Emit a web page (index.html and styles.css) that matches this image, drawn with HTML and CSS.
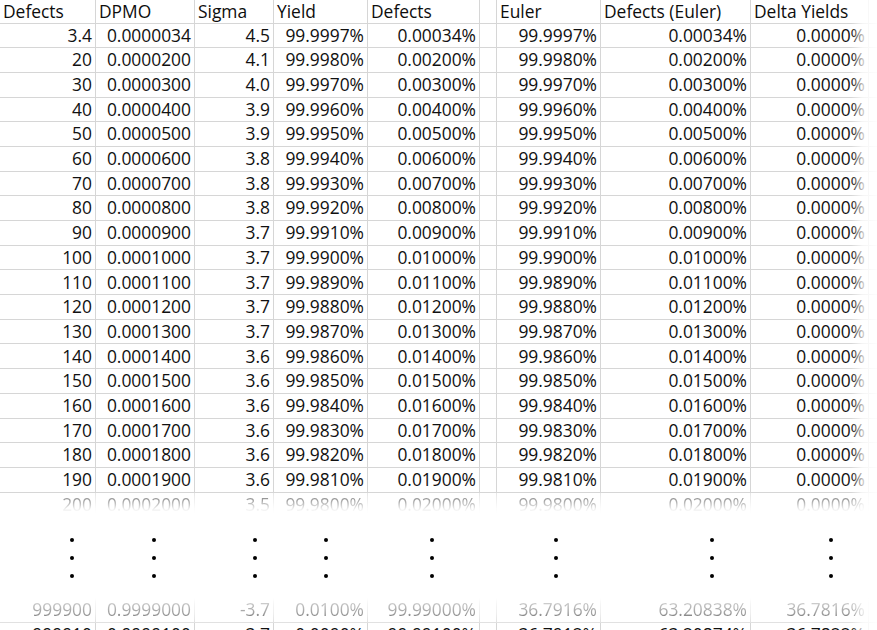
FILE: index.html
```html
<!DOCTYPE html>
<html lang="en">
<head>
<meta charset="utf-8">
<title>Sigma table</title>
<link rel="stylesheet" href="styles.css">
</head>
<body>
<div class="sheet">
  <div class="row head">
    <div class="c">Defects</div><div class="c">DPMO</div><div class="c">Sigma</div><div class="c">Yield</div><div class="c">Defects</div><div class="c"></div><div class="c">Euler</div><div class="c">Defects (Euler)</div><div class="c">Delta Yields</div><div class="c"></div>
  </div>
  <div class="row"><div class="c">3.4</div><div class="c">0.0000034</div><div class="c">4.5</div><div class="c">99.9997%</div><div class="c">0.00034%</div><div class="c"></div><div class="c">99.9997%</div><div class="c">0.00034%</div><div class="c">0.0000%</div><div class="c"></div></div>
  <div class="row"><div class="c">20</div><div class="c">0.0000200</div><div class="c">4.1</div><div class="c">99.9980%</div><div class="c">0.00200%</div><div class="c"></div><div class="c">99.9980%</div><div class="c">0.00200%</div><div class="c">0.0000%</div><div class="c"></div></div>
  <div class="row"><div class="c">30</div><div class="c">0.0000300</div><div class="c">4.0</div><div class="c">99.9970%</div><div class="c">0.00300%</div><div class="c"></div><div class="c">99.9970%</div><div class="c">0.00300%</div><div class="c">0.0000%</div><div class="c"></div></div>
  <div class="row"><div class="c">40</div><div class="c">0.0000400</div><div class="c">3.9</div><div class="c">99.9960%</div><div class="c">0.00400%</div><div class="c"></div><div class="c">99.9960%</div><div class="c">0.00400%</div><div class="c">0.0000%</div><div class="c"></div></div>
  <div class="row"><div class="c">50</div><div class="c">0.0000500</div><div class="c">3.9</div><div class="c">99.9950%</div><div class="c">0.00500%</div><div class="c"></div><div class="c">99.9950%</div><div class="c">0.00500%</div><div class="c">0.0000%</div><div class="c"></div></div>
  <div class="row"><div class="c">60</div><div class="c">0.0000600</div><div class="c">3.8</div><div class="c">99.9940%</div><div class="c">0.00600%</div><div class="c"></div><div class="c">99.9940%</div><div class="c">0.00600%</div><div class="c">0.0000%</div><div class="c"></div></div>
  <div class="row"><div class="c">70</div><div class="c">0.0000700</div><div class="c">3.8</div><div class="c">99.9930%</div><div class="c">0.00700%</div><div class="c"></div><div class="c">99.9930%</div><div class="c">0.00700%</div><div class="c">0.0000%</div><div class="c"></div></div>
  <div class="row"><div class="c">80</div><div class="c">0.0000800</div><div class="c">3.8</div><div class="c">99.9920%</div><div class="c">0.00800%</div><div class="c"></div><div class="c">99.9920%</div><div class="c">0.00800%</div><div class="c">0.0000%</div><div class="c"></div></div>
  <div class="row"><div class="c">90</div><div class="c">0.0000900</div><div class="c">3.7</div><div class="c">99.9910%</div><div class="c">0.00900%</div><div class="c"></div><div class="c">99.9910%</div><div class="c">0.00900%</div><div class="c">0.0000%</div><div class="c"></div></div>
  <div class="row"><div class="c">100</div><div class="c">0.0001000</div><div class="c">3.7</div><div class="c">99.9900%</div><div class="c">0.01000%</div><div class="c"></div><div class="c">99.9900%</div><div class="c">0.01000%</div><div class="c">0.0000%</div><div class="c"></div></div>
  <div class="row"><div class="c">110</div><div class="c">0.0001100</div><div class="c">3.7</div><div class="c">99.9890%</div><div class="c">0.01100%</div><div class="c"></div><div class="c">99.9890%</div><div class="c">0.01100%</div><div class="c">0.0000%</div><div class="c"></div></div>
  <div class="row"><div class="c">120</div><div class="c">0.0001200</div><div class="c">3.7</div><div class="c">99.9880%</div><div class="c">0.01200%</div><div class="c"></div><div class="c">99.9880%</div><div class="c">0.01200%</div><div class="c">0.0000%</div><div class="c"></div></div>
  <div class="row"><div class="c">130</div><div class="c">0.0001300</div><div class="c">3.7</div><div class="c">99.9870%</div><div class="c">0.01300%</div><div class="c"></div><div class="c">99.9870%</div><div class="c">0.01300%</div><div class="c">0.0000%</div><div class="c"></div></div>
  <div class="row"><div class="c">140</div><div class="c">0.0001400</div><div class="c">3.6</div><div class="c">99.9860%</div><div class="c">0.01400%</div><div class="c"></div><div class="c">99.9860%</div><div class="c">0.01400%</div><div class="c">0.0000%</div><div class="c"></div></div>
  <div class="row"><div class="c">150</div><div class="c">0.0001500</div><div class="c">3.6</div><div class="c">99.9850%</div><div class="c">0.01500%</div><div class="c"></div><div class="c">99.9850%</div><div class="c">0.01500%</div><div class="c">0.0000%</div><div class="c"></div></div>
  <div class="row"><div class="c">160</div><div class="c">0.0001600</div><div class="c">3.6</div><div class="c">99.9840%</div><div class="c">0.01600%</div><div class="c"></div><div class="c">99.9840%</div><div class="c">0.01600%</div><div class="c">0.0000%</div><div class="c"></div></div>
  <div class="row"><div class="c">170</div><div class="c">0.0001700</div><div class="c">3.6</div><div class="c">99.9830%</div><div class="c">0.01700%</div><div class="c"></div><div class="c">99.9830%</div><div class="c">0.01700%</div><div class="c">0.0000%</div><div class="c"></div></div>
  <div class="row"><div class="c">180</div><div class="c">0.0001800</div><div class="c">3.6</div><div class="c">99.9820%</div><div class="c">0.01800%</div><div class="c"></div><div class="c">99.9820%</div><div class="c">0.01800%</div><div class="c">0.0000%</div><div class="c"></div></div>
  <div class="row"><div class="c">190</div><div class="c">0.0001900</div><div class="c">3.6</div><div class="c">99.9810%</div><div class="c">0.01900%</div><div class="c"></div><div class="c">99.9810%</div><div class="c">0.01900%</div><div class="c">0.0000%</div><div class="c"></div></div>
  <div class="row fade-down"><div class="c">200</div><div class="c">0.0002000</div><div class="c">3.5</div><div class="c">99.9800%</div><div class="c">0.02000%</div><div class="c"></div><div class="c">99.9800%</div><div class="c">0.02000%</div><div class="c">0.0000%</div><div class="c"></div></div>

  <div class="row dots">
    <div class="d d0"><i></i><i></i><i></i></div>
    <div class="d d1"><i></i><i></i><i></i></div>
    <div class="d d2"><i></i><i></i><i></i></div>
    <div class="d d3"><i></i><i></i><i></i></div>
    <div class="d d4"><i></i><i></i><i></i></div>
    <div class="d"></div>
    <div class="d d6"><i></i><i></i><i></i></div>
    <div class="d d7"><i></i><i></i><i></i></div>
    <div class="d d8"><i></i><i></i><i></i></div>
    <div class="d"></div>
  </div>

  <div class="row fade-up"><div class="c">999900</div><div class="c">0.9999000</div><div class="c">-3.7</div><div class="c">0.0100%</div><div class="c">99.99000%</div><div class="c"></div><div class="c">36.7916%</div><div class="c">63.20838%</div><div class="c">36.7816%</div><div class="c"></div></div>
  <div class="row"><div class="c">999910</div><div class="c">0.9999100</div><div class="c">-3.7</div><div class="c">0.0090%</div><div class="c">99.99100%</div><div class="c"></div><div class="c">36.7912%</div><div class="c">63.20874%</div><div class="c">36.7822%</div><div class="c"></div></div>

  <div class="edge-fade"></div>
</div>
</body>
</html>
```

FILE: styles.css
```css
* { box-sizing: border-box; }

html, body {
  margin: 0;
  padding: 0;
  background: #ffffff;
  overflow: hidden;
}

body {
  width: 877px;
  height: 630px;
  font-family: "Open Sans", "Liberation Sans", sans-serif;
  font-size: 17.4px;
  color: #111111;
}

.sheet {
  position: relative;
  width: 877px;
  height: 630px;
  overflow: hidden;
}

.row {
  display: grid;
  grid-template-columns: 96px 99px 79px 94px 112px 17px 104px 150px 118px 1fr;
  height: 24.7px;
  border-bottom: 1px solid #d6d6d6;
}

.row .c {
  display: flex;
  align-items: center;
  justify-content: flex-end;
  padding: 0 3px 0 3px;
  border-right: 1px solid #d6d6d6;
  white-space: nowrap;
  overflow: visible;
  line-height: 1;
}

.row .c:last-child { border-right: none; }

.row.head {
  height: 23.5px;
}

.row.head .c {
  justify-content: flex-start;
  padding-left: 3px;
  color: #0d0d0d;
}

.row.fade-down {
  -webkit-mask-image: linear-gradient(to bottom, rgba(0,0,0,0.6) 0%, rgba(0,0,0,0.35) 35%, rgba(0,0,0,0.08) 65%, rgba(0,0,0,0) 85%);
  mask-image: linear-gradient(to bottom, rgba(0,0,0,0.6) 0%, rgba(0,0,0,0.35) 35%, rgba(0,0,0,0.08) 65%, rgba(0,0,0,0) 85%);
}

.row.fade-up {
  -webkit-mask-image: linear-gradient(to bottom, rgba(0,0,0,0) 0%, rgba(0,0,0,0.25) 25%, rgba(0,0,0,0.4) 60%, rgba(0,0,0,0.75) 100%);
  mask-image: linear-gradient(to bottom, rgba(0,0,0,0) 0%, rgba(0,0,0,0.25) 25%, rgba(0,0,0,0.4) 60%, rgba(0,0,0,0.75) 100%);
}

.row.dots {
  height: 81px;
  border-bottom: none;
}

.d {
  display: flex;
  flex-direction: column;
  align-items: flex-end;
  justify-content: center;
  gap: 14px;
}

.d i {
  display: block;
  width: 4px;
  height: 4px;
  border-radius: 50%;
  background: #000;
}

.d0 { padding-right: 22px; }
.d1 { padding-right: 39px; }
.d2 { padding-right: 17px; }
.d3 { padding-right: 40px; }
.d4 { padding-right: 46px; }
.d6 { padding-right: 43px; }
.d7 { padding-right: 37px; }
.d8 { padding-right: 36px; }

.edge-fade {
  position: absolute;
  top: 0;
  right: 0;
  width: 26px;
  height: 100%;
  background: linear-gradient(to right, rgba(255,255,255,0) 0%, rgba(255,255,255,0.75) 45%, rgba(255,255,255,0.95) 100%);
  pointer-events: none;
}
```
